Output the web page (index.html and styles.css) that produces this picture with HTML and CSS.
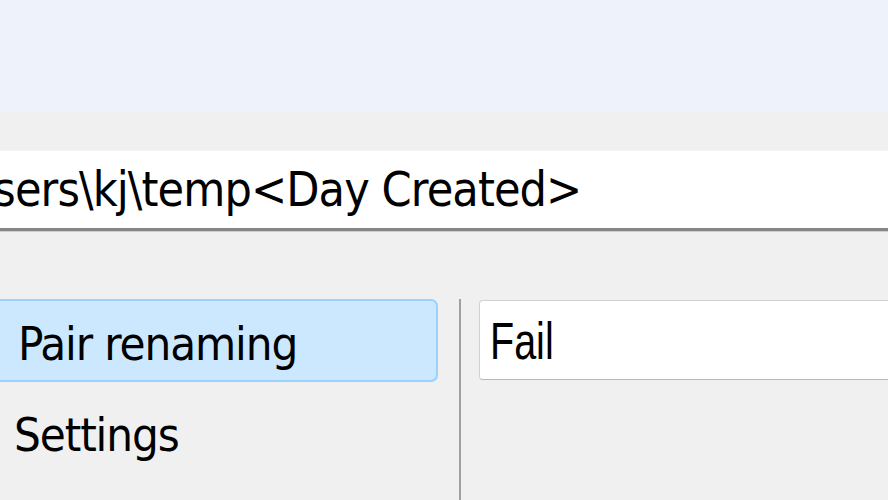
FILE: index.html
```html
<!DOCTYPE html>
<html lang="en">
<head>
<meta charset="utf-8">
<title>Pair renaming</title>
<link rel="stylesheet" href="styles.css">
</head>
<body>
<div class="window">
  <div class="topbar"></div>
  <div class="toolbar"></div>
  <div class="pathbar">
    <span class="path">C:\Users\kj\temp&lt;Day Created&gt;</span>
  </div>
  <div class="main">
    <nav class="nav">
      <div class="nav-item selected">Pair renaming</div>
      <div class="nav-item">Settings</div>
    </nav>
    <div class="divider"></div>
    <section class="content">
      <div class="field"><span class="field-text">Fail</span></div>
    </section>
  </div>
</div>
</body>
</html>
```
FILE: styles.css
```css
html, body {
  margin: 0;
  padding: 0;
}
body {
  width: 888px;
  height: 500px;
  overflow: hidden;
  background: #f0f0f0;
  font-family: "DejaVu Sans Condensed", "DejaVu Sans", sans-serif;
  color: #000;
}
.window {
  display: flex;
  flex-direction: column;
  height: 500px;
}
.topbar {
  height: 113px;
  background: linear-gradient(to bottom, #eef2fb 0, #eef2fb 109px, #eff0f2 113px);
}
.toolbar {
  height: 37px;
  background: #f0f0f0;
}
.pathbar {
  height: 77px;
  background: #ffffff;
  border-top: 1px solid #f4f4f4;
  border-bottom: 3px solid #858585;
  box-shadow: 0 1px 0 #cfcfcf;
  display: flex;
  align-items: center;
  overflow: hidden;
  white-space: nowrap;
}
.path {
  font-size: 48px;
  margin-left: -94px;
  letter-spacing: -0.9px;
  line-height: 1;
  padding-bottom: 2px;
}
.main {
  display: flex;
  flex: 1;
  margin-top: 68px;
  min-height: 0;
}
.nav {
  width: 479px;
  margin-left: -20px;
  flex: none;
  display: flex;
  flex-direction: column;
  gap: 8px;
  padding-right: 21px;
  box-sizing: border-box;
}
.nav-item {
  height: 83px;
  box-sizing: border-box;
  font-size: 47px;
  letter-spacing: -1.1px;
  line-height: 1;
  display: flex;
  align-items: center;
  padding-left: 32px;
  padding-top: 6px;
  white-space: nowrap;
  border: 2px solid transparent;
  border-radius: 7px;
}
.nav-item.selected {
  background: #cce8ff;
  border-color: #99d1ff;
  padding-left: 36px;
}
.divider {
  width: 2px;
  background: #a0a0a0;
  flex: none;
}
.content {
  flex: 1;
  padding-left: 18px;
  min-width: 0;
}
.field {
  height: 80px;
  margin-top: 1px;
  margin-right: -20px;
  box-sizing: border-box;
  background: #ffffff;
  border: 1px solid #d0d0d0;
  border-bottom-color: #b8b8b8;
  border-radius: 4px;
  display: flex;
  align-items: center;
  padding-left: 10px;
  padding-top: 2px;
}
.field-text {
  display: inline-block;
  font-family: "Liberation Sans", Arial, sans-serif;
  font-size: 52px;
  line-height: 1;
  transform: scaleX(0.76);
  transform-origin: left center;
}
```
